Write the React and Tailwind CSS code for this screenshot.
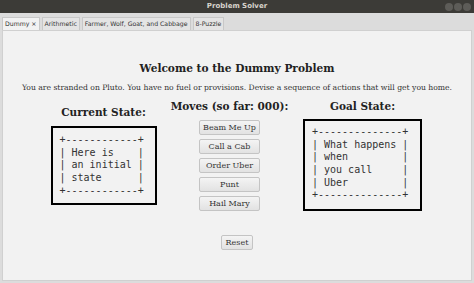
import React from 'react';

const serif = { fontFamily: '"DejaVu Serif", "Liberation Serif", serif' };
const mono = { fontFamily: '"DejaVu Sans Mono", "Liberation Mono", monospace' };
const sans = { fontFamily: '"DejaVu Sans", "Liberation Sans", sans-serif' };

const tabs = ['Dummy ×', 'Arithmetic', 'Farmer, Wolf, Goat, and Cabbage', '8-Puzzle'];
const moves = ['Beam Me Up', 'Call a Cab', 'Order Uber', 'Punt', 'Hail Mary'];

function StateBox({ lines, className }) {
    return (
        <div className={`border-2 border-black px-[7px] ${className}`}>
            <pre className="text-[10px] leading-[12.6px] text-[#333]" style={mono}>
                {lines.join('\n')}
            </pre>
        </div>
    );
}

function MoveButton({ label }) {
    return (
        <button
            className="w-[61px] h-[15px] rounded-[2px] border border-[#c4c4c4] bg-gradient-to-b from-[#f4f4f4] to-[#e2e2e2] text-[8px] text-[#333] leading-none"
            style={serif}
        >
            {label}
        </button>
    );
}

export default function App() {
    return (
        <div className="w-[474px] h-[283px] bg-[#dcdcdc] flex flex-col overflow-hidden">
            {/* Title bar */}
            <div className="h-[13px] bg-[#3c3b37] flex items-center justify-center relative">
                <span className="text-[7px] font-bold text-[#d8d4cc]" style={sans}>Problem Solver</span>
                <div className="absolute right-[3px] top-[3px] flex gap-[1px]">
                    <span className="w-[8px] h-[8px] rounded-full bg-[#5d5c58]" />
                    <span className="w-[8px] h-[8px] rounded-full bg-[#5d5c58]" />
                    <span className="w-[8px] h-[8px] rounded-full bg-[#5d5c58]" />
                </div>
            </div>

            {/* Tabs */}
            <div className="h-[17px] flex items-end gap-[2px] pl-[2px] bg-[#dcdcdc]">
                {tabs.map((t, i) => (
                    <div
                        key={t}
                        className={`h-[13px] px-[2px] flex items-center border border-b-0 border-[#c8c8c8] text-[6.2px] text-[#333] ${i === 0 ? 'bg-[#f2f2f2]' : 'bg-[#e4e4e4]'}`}
                        style={sans}
                    >
                        {t}
                    </div>
                ))}
            </div>

            {/* Content */}
            <div className="flex-1 mx-[2px] mb-[2px] bg-[#f2f2f2] border border-[#d0d0d0] flex flex-col items-center">
                <h1 className="mt-[30px] text-[10.6px] font-bold text-[#222]" style={serif}>
                    Welcome to the Dummy Problem
                </h1>
                <p className="mt-[5px] text-[7.65px] text-[#333]" style={serif}>
                    You are stranded on Pluto. You have no fuel or provisions. Devise a sequence of actions that will get you home.
                </p>

                <div className="mt-[6px] w-full flex items-center">
                    {/* Current */}
                    <div className="w-[163px] flex flex-col items-center pl-[38px]">
                        <h2 className="text-[10.5px] font-bold text-[#222] mb-[5px]" style={serif}>Current State:</h2>
                        <StateBox
                            className="w-[106px] py-[6px]"
                            lines={['+------------+', '| Here is    |', '| an initial |', '| state      |', '+------------+']}
                        />
                    </div>

                    {/* Moves */}
                    <div className="w-[127px] flex flex-col items-center self-start">
                        <h2 className="text-[10.5px] font-bold text-[#222] mb-[5px]" style={serif}>Moves (so far: 000):</h2>
                        <div className="flex flex-col gap-[4px]">
                            {moves.map((m) => (
                                <MoveButton key={m} label={m} />
                            ))}
                        </div>
                    </div>

                    {/* Goal */}
                    <div className="w-[139px] flex flex-col items-center self-start">
                        <h2 className="text-[10.5px] font-bold text-[#222] mb-[4px]" style={serif}>Goal State:</h2>
                        <StateBox
                            className="w-[119px] pt-[5px] pb-[7px]"
                            lines={['+--------------+', '| What happens |', '| when         |', '| you call     |', '| Uber         |', '+--------------+']}
                        />
                    </div>
                </div>

                <button
                    className="mt-[24px] w-[32px] h-[15px] rounded-[2px] border border-[#c4c4c4] bg-gradient-to-b from-[#f4f4f4] to-[#e2e2e2] text-[8px] text-[#333] leading-none"
                    style={serif}
                >
                    Reset
                </button>
            </div>
        </div>
    );
}
